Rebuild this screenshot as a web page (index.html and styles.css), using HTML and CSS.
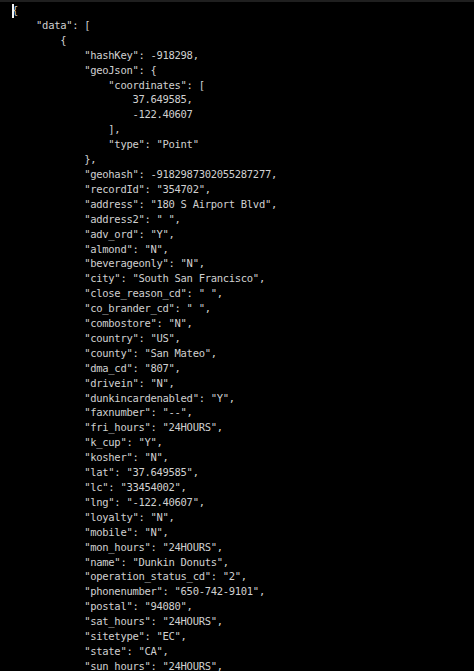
FILE: index.html
```html
<!DOCTYPE html>
<html>
<head>
<meta charset="utf-8">
<link rel="stylesheet" href="styles.css">
</head>
<body>
<div class="topbar"></div>
<pre class="json"><span class="cursor-brace">{</span>
    "data": [
        {
            "hashKey": -918298,
            "geoJson": {
                "coordinates": [
                    37.649585,
                    -122.40607
                ],
                "type": "Point"
            },
            "geohash": -9182987302055287277,
            "recordId": "354702",
            "address": "180 S Airport Blvd",
            "address2": " ",
            "adv_ord": "Y",
            "almond": "N",
            "beverageonly": "N",
            "city": "South San Francisco",
            "close_reason_cd": " ",
            "co_brander_cd": " ",
            "combostore": "N",
            "country": "US",
            "county": "San Mateo",
            "dma_cd": "807",
            "drivein": "N",
            "dunkincardenabled": "Y",
            "faxnumber": "--",
            "fri_hours": "24HOURS",
            "k_cup": "Y",
            "kosher": "N",
            "lat": "37.649585",
            "lc": "33454002",
            "lng": "-122.40607",
            "loyalty": "N",
            "mobile": "N",
            "mon_hours": "24HOURS",
            "name": "Dunkin Donuts",
            "operation_status_cd": "2",
            "phonenumber": "650-742-9101",
            "postal": "94080",
            "sat_hours": "24HOURS",
            "sitetype": "EC",
            "state": "CA",
            "sun_hours": "24HOURS",</pre>
</body>
</html>
```

FILE: styles.css
```css
html, body {
  margin: 0;
  padding: 0;
  background: #000000;
  height: 100%;
  overflow: hidden;
}

.topbar {
  height: 2px;
  background: #1f1f1f;
}

.json {
  margin: 0;
  padding: 1px 0 0 12px;
  font-family: "DejaVu Sans Mono", "Liberation Mono", monospace;
  font-size: 10.5px;
  letter-spacing: -0.3px;
  line-height: 14.9px;
  color: #d0d0d0;
}

.cursor-brace {
  position: relative;
}

.cursor-brace::before {
  content: "";
  position: absolute;
  left: 0;
  top: 0;
  width: 2px;
  height: 14px;
  background: #f2f2f2;
}
```
